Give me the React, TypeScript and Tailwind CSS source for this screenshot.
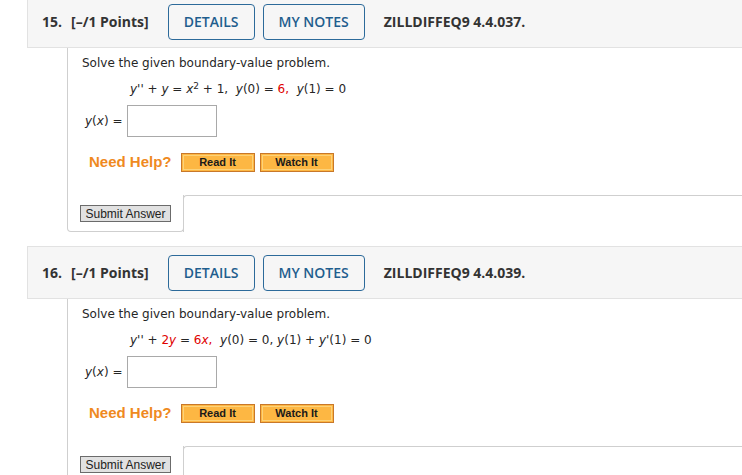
import React from 'react';

const body = { fontFamily: '"DejaVu Sans", Verdana, sans-serif' };
const head = { fontFamily: '"Open Sans", "Liberation Sans", sans-serif' };
const arial = { fontFamily: '"Liberation Sans", Arial, sans-serif' };

const V = ({ children }: { children: React.ReactNode }) => <i>{children}</i>;
const Red = ({ children }: { children: React.ReactNode }) => <span className="text-[#e00000]">{children}</span>;

const HelpButton = ({ label }: { label: string }) => (
  <button
    style={arial}
    className="h-[19px] w-[74px] border border-[#c8782a] bg-[#fdb743] p-[1px] text-[11px] font-bold leading-none text-[#1a1a1a]"
  >
    <span className="flex h-full w-full items-center justify-center border border-[#fcd27a]">{label}</span>
  </button>
);

const Question = ({ num, code, equation }: { num: string; code: string; equation: React.ReactNode }) => (
  <div>
    <div
      style={head}
      className="ml-[27px] flex h-[53px] items-center border border-r-0 border-[#e2e2e2] bg-[#f6f6f6] pl-[14px] text-[14px] text-[#333]"
    >
      <span className="font-bold">{num}.</span>
      <span className="ml-[9px] font-bold">[–/1 Points]</span>
      <button className="ml-[19px] h-[36px] rounded-[4px] border border-[#2c6a9a] px-[15px] text-[14px] font-semibold text-[#1f5e8e]">
        DETAILS
      </button>
      <button className="ml-[8px] h-[36px] rounded-[4px] border border-[#2c6a9a] px-[15px] text-[14px] font-semibold text-[#1f5e8e]">
        MY NOTES
      </button>
      <span className="ml-[19px] font-bold">{code}</span>
    </div>
    <div style={body} className="ml-[67px] text-[12px] text-[#262626]">
      <div className="border-l border-[#cfcfcf] pl-[14px] pt-[7px]">
        <p className="leading-[16px]">Solve the given boundary-value problem.</p>
        <p className="mt-[10px] pl-[48px] leading-[16px] whitespace-pre">{equation}</p>
        <div className="mt-[8px] flex items-center pl-[3px]">
          <span className="whitespace-pre">
            <V>y</V>(<V>x</V>) =
          </span>
          <div className="ml-[5px] h-[32px] w-[90px] border border-[#a9a9a9] bg-white" />
        </div>
        <div className="mt-[16px] flex h-[19px] items-center pl-[7px]">
          <span style={arial} className="text-[15px] font-bold text-[#ef8a1f]">
            Need Help?
          </span>
          <span className="ml-[9px]">
            <HelpButton label="Read It" />
          </span>
          <span className="ml-[5px]">
            <HelpButton label="Watch It" />
          </span>
        </div>
        <div className="h-[23px]" />
      </div>
      <div className="flex">
        <div className="h-[37px] w-[117px] rounded-b-[4px] border border-t-0 border-[#cfcfcf] pl-[12px] pt-[10px]">
          <button
            style={arial}
            className="flex h-[17px] w-[91px] items-center justify-center border border-[#6b6b6b] bg-[#e1e1e1] text-[12px] leading-none text-[#222]"
          >
            Submit Answer
          </button>
        </div>
        <div className="-ml-[1px] h-[37px] flex-1 rounded-tl-[4px] border-l border-t border-[#cfcfcf]" />
      </div>
    </div>
  </div>
);

export default function App() {
  return (
    <div className="h-[475px] w-[742px] overflow-hidden bg-white">
      <div className="-mt-[5px] flex flex-col gap-[14px]">
        <Question
          num="15"
          code="ZILLDIFFEQ9 4.4.037."
          equation={
            <>
              <V>y</V>'' + <V>y</V> = <V>x</V>
              <sup className="text-[9px]">2</sup> + 1,  <V>y</V>(0) = <Red>6,</Red>  <V>y</V>(1) = 0
            </>
          }
        />
        <Question
          num="16"
          code="ZILLDIFFEQ9 4.4.039."
          equation={
            <>
              <V>y</V>'' + <Red>2<V>y</V></Red> = <Red>6<V>x</V>,</Red>  <V>y</V>(0) = 0, <V>y</V>(1) + <V>y</V>'(1) = 0
            </>
          }
        />
      </div>
    </div>
  );
}
